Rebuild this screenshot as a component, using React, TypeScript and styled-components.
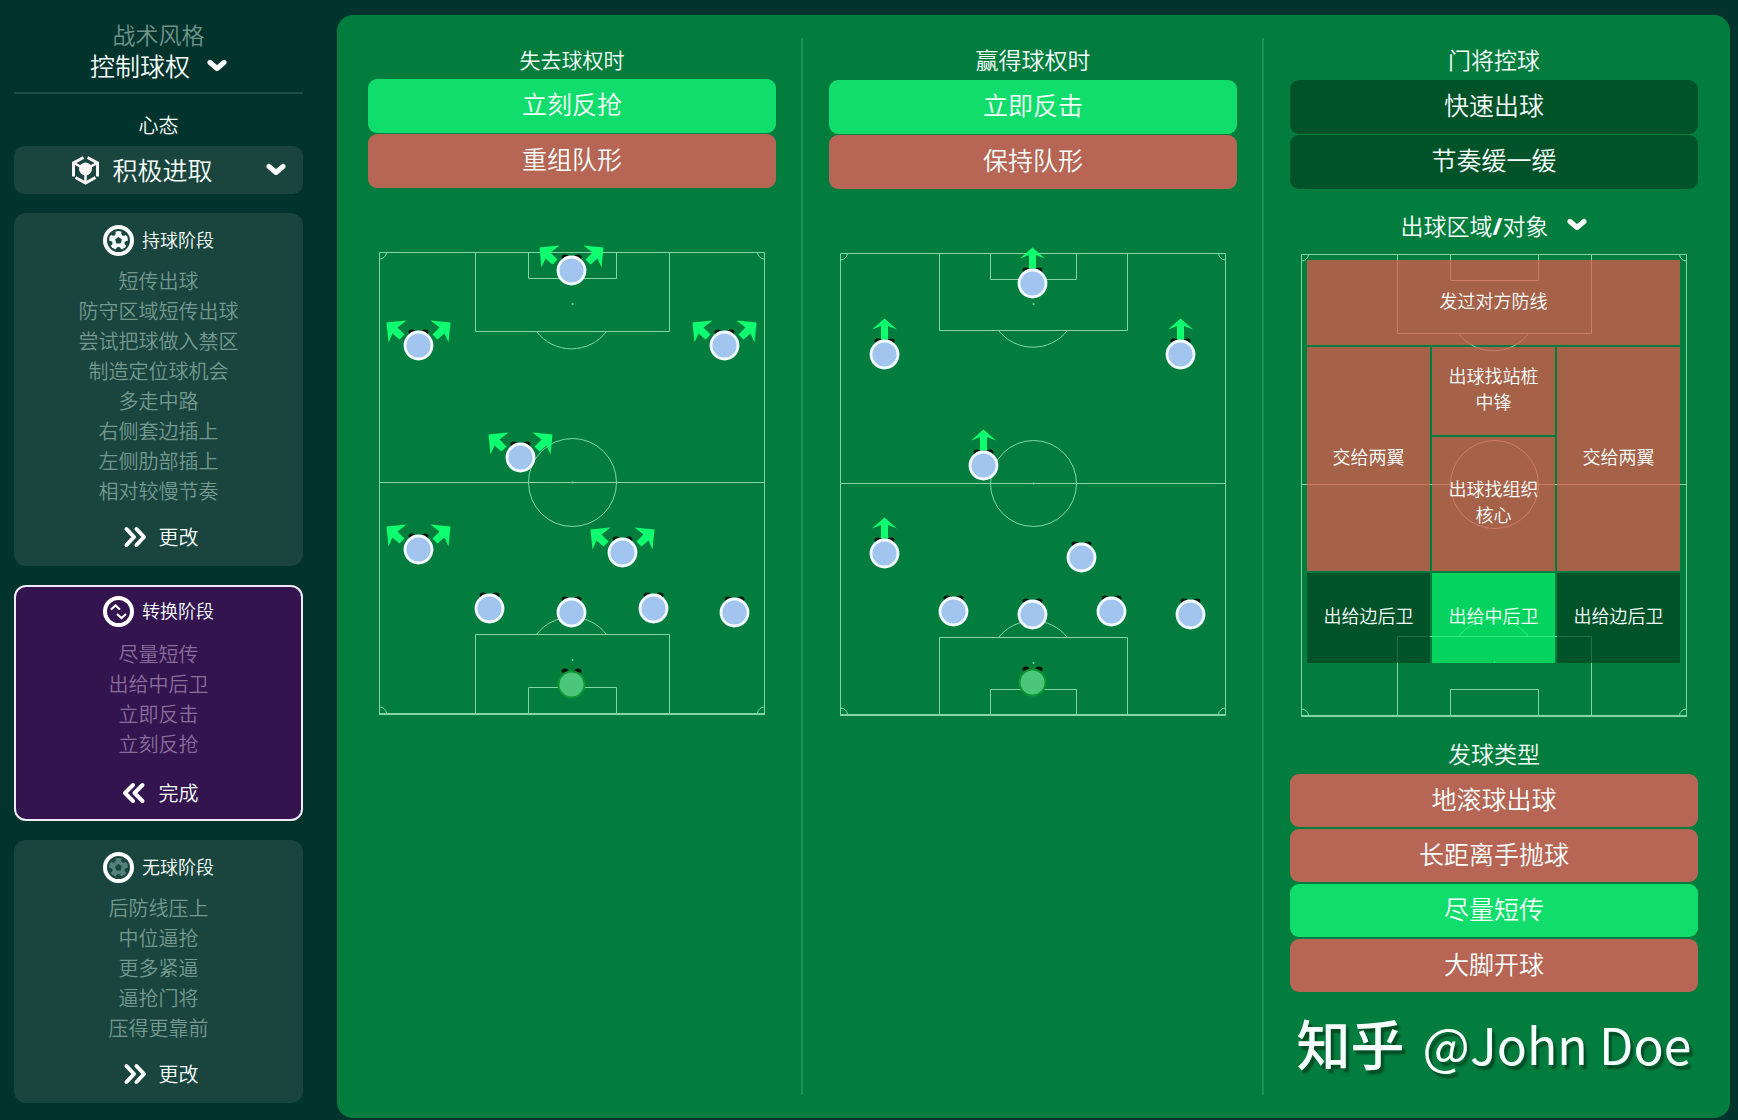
import React, { useState } from "react";
import styled, { createGlobalStyle, css } from "styled-components";

const GlobalStyle = createGlobalStyle`
  * { box-sizing: border-box; }
  body {
    margin: 0;
    background: #02332c;
    color: #f6fffc;
    font-family: "Noto Sans CJK SC", "Noto Sans", sans-serif;
    font-weight: 350;
  }
  button, select { font: inherit; color: inherit; cursor: pointer; }
  h2, h3, ul, p { margin: 0; padding: 0; font-weight: inherit; }
`;

/* ---------- shell ---------- */

const Page = styled.div`
  display: grid;
  grid-template-columns: 289px minmax(0, 1fr);
  gap: 34px;
  min-height: 100vh;
  padding: 15px 8px 2px 14px;
`;

const Sidebar = styled.aside`
  display: flex;
  flex-direction: column;
  gap: 19px;
`;

const Board = styled.main`
  display: grid;
  grid-template-columns: repeat(3, minmax(0, 1fr));
  padding: 23px 5px;
  border-radius: 16px;
  background: #027d3e;
`;

/* ---------- sidebar ---------- */

const StyleBlock = styled.div`
  display: flex;
  flex-direction: column;
  align-items: center;
  padding: 3px 0 10px;
  border-bottom: 2px solid #1b4f46;
`;

const StyleLabel = styled.label`
  font-size: 23px;
  line-height: 32px;
  color: #6f948a;
`;

const StylePicker = styled.div`
  display: flex;
  align-items: center;
  gap: 17px;
`;

const PlainSelect = styled.select`
  appearance: none;
  field-sizing: content;
  padding: 0 0 2px;
  border: 0;
  background: transparent;
  font-size: 25px;
  line-height: 30px;
`;

const MentalityBlock = styled.div`
  display: flex;
  flex-direction: column;
  gap: 6px;
  margin-top: -3px;
  text-align: center;
`;

const MentalityLabel = styled.label`
  font-size: 20px;
  line-height: 30px;
`;

const MentalityField = styled.div`
  display: flex;
  align-items: center;
  height: 48px;
  padding: 0 17px 0 4px;
  border-radius: 10px;
  background: #1a453e;
`;

const MentalityValue = styled.div`
  display: flex;
  flex: 1;
  align-items: center;
  justify-content: center;
  gap: 12px;
`;

const PhaseCard = styled.section<{ $active?: boolean }>`
  display: flex;
  flex-direction: column;
  align-items: center;
  gap: ${(p) => (p.$active ? "12px" : "10px")};
  padding: 12px 0 14px;
  border-radius: 12px;
  background: #1a453e;
  ${(p) =>
    p.$active &&
    css`
      padding: 9px 0 11px;
      border: 2px solid #eeeaf8;
      background: #33144f;
    `}
`;

const PhaseHeader = styled.h2`
  display: flex;
  align-items: center;
  gap: 8px;
  height: 31px;
  font-size: 18px;
  line-height: 28px;
`;

const PhaseTitle = styled.span`
  padding-bottom: 3px;
`;

const PhaseList = styled.ul<{ $active?: boolean }>`
  list-style: none;
  text-align: center;
  font-size: 20px;
  line-height: 30px;
  color: ${(p) => (p.$active ? "#896d9b" : "#739990")};
`;

const PhaseAction = styled.button<{ $active?: boolean }>`
  display: flex;
  align-items: center;
  gap: 12px;
  margin-top: ${(p) => (p.$active ? "7px" : "6px")};
  padding: 0;
  border: 0;
  background: transparent;
  font-size: 20px;
  line-height: 30px;
`;

/* ---------- board columns ---------- */

const Column = styled.section`
  display: flex;
  flex-direction: column;
  padding: 0 25px 0 26px;
  border-right: 2px solid #1d9155;
  &:last-child { border-color: transparent; }
`;

const ColumnTitle = styled.h3<{ $compact?: boolean }>`
  padding-top: 1px;
  text-align: center;
  font-size: ${(p) => (p.$compact ? "21px" : "23px")};
  line-height: ${(p) => (p.$compact ? "40px" : "41px")};
`;

const Choices = styled.div<{ $spaced?: boolean }>`
  display: grid;
  gap: ${(p) => (p.$spaced ? "2px" : "1px")};
  grid-auto-rows: ${(p) => (p.$spaced ? "53px" : "54px")};
`;

type Tone = "on" | "off" | "idle";
const toneFill: Record<Tone, string> = { on: "#10dd6b", off: "#b76656", idle: "#005228" };

const Choice = styled.button<{ $tone: Tone }>`
  padding: 0 0 6px;
  border: 0;
  border-radius: 9px;
  background: ${(p) => toneFill[p.$tone]};
  font-size: 25px;
  line-height: 32px;
`;

const PitchArea = styled.div<{ $below?: boolean }>`
  position: relative;
  margin: ${(p) => (p.$below ? "0 11px 14px" : "64px 11px 0")};
`;

const PitchSvg = styled.svg`
  display: block;
  width: 100%;
  height: auto;
  overflow: visible;
`;

const TargetButton = styled.button`
  display: flex;
  align-items: center;
  justify-content: center;
  gap: 19px;
  height: 56px;
  margin-top: 9px;
  padding: 0 0 2px;
  border: 0;
  background: transparent;
  font-size: 23px;
  line-height: 32px;
`;

const Slash = styled.b`
  font-family: "Noto Sans", sans-serif;
  font-weight: 800;
`;

const ZoneGrid = styled.div`
  position: absolute;
  inset: 6px 7px 55px 6px;
  display: grid;
  gap: 2px;
  grid-template-columns: repeat(3, minmax(0, 1fr));
  grid-template-rows: 85fr 88fr 134fr 90fr;
  grid-template-areas:
    "long long long"
    "wingL target wingR"
    "wingL maker wingR"
    "backL centre backR";
`;

const zoneFill: Record<Tone, string> = {
  on: "rgba(6, 248, 109, 0.7)",
  off: "rgba(236, 85, 79, 0.7)",
  idle: "rgba(0, 64, 31, 0.7)",
};

const Zone = styled.button<{ $area: string; $tone: Tone }>`
  grid-area: ${(p) => p.$area};
  padding: 0 16px 6px;
  border: 0;
  background: ${(p) => zoneFill[p.$tone]};
  font-size: 18px;
  line-height: 26px;
`;

const Credit = styled.p`
  display: flex;
  align-items: center;
  justify-content: center;
  gap: 18px;
  margin-top: 18px;
  font-size: 50px;
  line-height: 66px;
  font-weight: 400;
  white-space: nowrap;
  text-shadow: 3px 4px 2px rgba(0, 50, 25, 0.65);
`;

const CreditBrand = styled.strong`
  font-size: 54px;
  font-weight: 500;
`;

/* ---------- icons ---------- */

const ChevronDown = () => (
  <svg width="20" height="14" viewBox="0 0 20 14" fill="none" aria-hidden="true">
    <path d="M3 3.500 L10 9.500 L17 3.500" stroke="#fff" strokeWidth="5" strokeLinecap="round" strokeLinejoin="round" />
  </svg>
);

const DoubleChevron = ({ back }: { back?: boolean }) => (
  <svg width="28" height="22" viewBox="0 0 28 22" fill="none" stroke="#fff" strokeWidth="4" strokeLinecap="round" strokeLinejoin="round" aria-hidden="true">
    {back ? <path d="M14 3 L6 11 L14 19 M23.500 3 L15.500 11 L23.500 19" /> : <path d="M7.500 3 L15 11 L7.500 19 M17.500 3 L25 11 L17.500 19" />}
  </svg>
);

const MentalityIcon = () => (
  <svg width="29" height="30" viewBox="0 0 29 30" fill="none" stroke="#fbf6f5" strokeWidth="3" aria-hidden="true">
    <path d="M12.500 2.500 L2.500 8 L2.500 21.500 M16.500 2.500 L26.500 8 L26.500 21.500" />
    <path d="M4.500 22.500 L14.500 28 L24.500 22.500" />
    <path d="M3 8 L14.500 14.500 L26 8 M14.500 14.500 V27" strokeWidth="2.500" />
    <circle cx="14.500" cy="14" r="6.500" fill="#fbf6f5" stroke="none" />
  </svg>
);

const BallIcon = ({ dim }: { dim?: boolean }) => {
  const fill = dim ? "#54827a" : "#f6fffc";
  const dark = "#1a453e";
  return (
    <svg width="31" height="31" viewBox="-15.5 -15.5 31 31" aria-hidden="true">
      <circle r="13.500" fill={dark} stroke="#fff" strokeWidth="4" />
      <circle r="9.500" fill={fill} />
      <path d="M0 -3.600 L3.400 -1.100 L2.100 2.900 L-2.100 2.900 L-3.400 -1.100 Z" fill={dark} />
      {[36, 108, 180, 252, 324].map((a) => (
        <path key={a} d="M-3.200 -9.800 L3.200 -9.800 L1.900 -7.300 L0 -6.200 L-1.900 -7.300 Z" fill={dark} transform={`rotate(${a})`} />
      ))}
    </svg>
  );
};

const TransitionIcon = () => (
  <svg width="31" height="31" viewBox="0 0 31 31" fill="none" stroke="#fff" aria-hidden="true">
    <circle cx="15.500" cy="15.500" r="13.500" strokeWidth="4" />
    <path d="M8 13.500 L12.500 9.500 L17 13.500 M14 18 L18.500 22 L23 18" strokeWidth="2.200" />
  </svg>
);

/* ---------- pitch drawing ---------- */

type Geometry = {
  boxL: number; boxR: number; boxT: number; boxB: number;
  goalL: number; goalR: number; goalT: number; goalB: number;
  arcL: number; arcR: number; ring: number; spotT: number; spotB: number;
};

const standard: Geometry = {
  boxL: 96.5, boxR: 290.5, boxT: 79.5, boxB: 382.5,
  goalL: 149.5, goalR: 237.5, goalT: 26.5, goalB: 435.5,
  arcL: 157.5, arcR: 227.5, ring: 44, spotT: 52, spotB: 408,
};

const narrow: Geometry = {
  boxL: 99.5, boxR: 287.5, boxT: 77.5, boxB: 384.5,
  goalL: 150.5, goalR: 236.5, goalT: 26.5, goalB: 436.5,
  arcL: 158.5, arcR: 227.5, ring: 43, spotT: 51, spotB: 410,
};

type Move = "press" | "forward" | "keeper" | undefined;
type Player = [number, number, Move?];

const pressing: Player[] = [
  [192, 18, "press"], [39, 93, "press"], [345, 93, "press"], [141, 205, "press"],
  [39, 297, "press"], [243, 300, "press"],
  [110, 356], [192, 360], [274, 356], [355, 360], [192, 432, "keeper"],
];

const countering: Player[] = [
  [192, 30, "forward"], [44, 101, "forward"], [340, 101, "forward"], [143, 212, "forward"],
  [44, 300, "forward"], [241, 304],
  [113, 358], [192, 361], [271, 358], [350, 361], [192, 429, "keeper"],
];

const wing = "-32,-23 -12,-25 -21,-18 -14,-11 -19,-6 -26,-12 -30,-3";

const Marker = ({ at: [x, y, move] }: { at: Player }) => (
  <g transform={`translate(${x + 0.5} ${y + 0.5})`}>
    <ellipse cx="-6.500" cy="-13.500" rx="3.500" ry="2.500" fill="#04140b" />
    <ellipse cx="6.500" cy="-13.500" rx="3.500" ry="2.500" fill="#04140b" />
    {move === "press" && (
      <g fill="#10ff70">
        <polygon points={wing} />
        <polygon points={wing} transform="scale(-1 1)" />
      </g>
    )}
    {move === "forward" && <polygon points="0,-36 12.500,-25 3.500,-28.500 3.500,-15 -3.500,-15 -3.500,-28.500 -12.500,-25" fill="#10ff70" />}
    {move === "keeper" ? (
      <circle r="13" fill="#4cc67a" stroke="#0b9632" strokeWidth="2" />
    ) : (
      <circle r="13.500" fill="#a1c5ef" stroke="#f3fbff" strokeWidth="2.800" />
    )}
  </g>
);

const Pitch = ({ g, players = [] }: { g: Geometry; players?: Player[] }) => (
  <PitchSvg viewBox="0 0 386 464" role="img" aria-label="球场">
    <g fill="none" stroke="#82d6a6">
      <path d="M0.500 462 V0.500 H385.500 V462 M0 230.500 H386" />
      <path d="M0 462 H386" strokeWidth="2" />
      <path d={`M${g.boxL} 0 V${g.boxT} H${g.boxR} V0 M${g.boxL} 462 V${g.boxB} H${g.boxR} V462`} />
      <path d={`M${g.goalL} 0 V${g.goalT} H${g.goalR} V0 M${g.goalL} 462 V${g.goalB} H${g.goalR} V462`} />
      <path d={`M${g.arcL} ${g.boxT} A44 44 0 0 0 ${g.arcR} ${g.boxT} M${g.arcL} ${g.boxB} A44 44 0 0 1 ${g.arcR} ${g.boxB}`} />
      <circle cx="193.500" cy="230.500" r={g.ring} />
      <path d="M7.500 0.500 A7 7 0 0 1 0.500 7 M378.500 0.500 A7 7 0 0 0 385.500 7 M7.500 461 A7 7 0 0 0 0.500 455 M378.500 461 A7 7 0 0 1 385.500 455" />
    </g>
    <g fill="#82d6a6">
      <circle cx="193.500" cy={g.spotT} r="1" />
      <circle cx="193.500" cy="230.500" r="1" />
      <circle cx="193.500" cy={g.spotB} r="1" />
    </g>
    {players.map((p) => (
      <Marker key={`${p[0]}-${p[1]}`} at={p} />
    ))}
  </PitchSvg>
);

/* ---------- data ---------- */

const zones: { area: string; tone: Tone; text: string }[] = [
  { area: "long", tone: "off", text: "发过对方防线" },
  { area: "wingL", tone: "off", text: "交给两翼" },
  { area: "target", tone: "off", text: "出球找站桩中锋" },
  { area: "wingR", tone: "off", text: "交给两翼" },
  { area: "maker", tone: "off", text: "出球找组织核心" },
  { area: "backL", tone: "idle", text: "出给边后卫" },
  { area: "centre", tone: "on", text: "出给中后卫" },
  { area: "backR", tone: "idle", text: "出给边后卫" },
];

const phases = [
  {
    title: "持球阶段",
    icon: <BallIcon />,
    items: ["短传出球", "防守区域短传出球", "尝试把球做入禁区", "制造定位球机会", "多走中路", "右侧套边插上", "左侧肋部插上", "相对较慢节奏"],
  },
  { title: "转换阶段", icon: <TransitionIcon />, active: true, items: ["尽量短传", "出给中后卫", "立即反击", "立刻反抢"] },
  { title: "无球阶段", icon: <BallIcon dim />, items: ["后防线压上", "中位逼抢", "更多紧逼", "逼抢门将", "压得更靠前"] },
];

const ChoiceGroup = ({ options, initial, rest = "off", spaced }: { options: string[]; initial?: string; rest?: Tone; spaced?: boolean }) => {
  const [picked, setPicked] = useState(initial);
  return (
    <Choices $spaced={spaced}>
      {options.map((o) => (
        <Choice key={o} type="button" aria-pressed={o === picked} $tone={o === picked ? "on" : rest} onClick={() => setPicked(o)}>
          {o}
        </Choice>
      ))}
    </Choices>
  );
};

export default function App() {
  return (
    <>
      <GlobalStyle />
      <Page>
        <Sidebar>
          <StyleBlock>
            <StyleLabel htmlFor="tactic-style">战术风格</StyleLabel>
            <StylePicker>
              <PlainSelect id="tactic-style">
                <option>控制球权</option>
              </PlainSelect>
              <ChevronDown />
            </StylePicker>
          </StyleBlock>
          <MentalityBlock>
            <MentalityLabel htmlFor="mentality">心态</MentalityLabel>
            <MentalityField>
              <MentalityValue>
                <MentalityIcon />
                <PlainSelect id="mentality">
                  <option>积极进取</option>
                </PlainSelect>
              </MentalityValue>
              <ChevronDown />
            </MentalityField>
          </MentalityBlock>
          {phases.map((p) => (
            <PhaseCard key={p.title} $active={p.active}>
              <PhaseHeader>
                {p.icon}
                <PhaseTitle>{p.title}</PhaseTitle>
              </PhaseHeader>
              <PhaseList $active={p.active}>
                {p.items.map((i) => (
                  <li key={i}>{i}</li>
                ))}
              </PhaseList>
              <PhaseAction type="button" $active={p.active}>
                <DoubleChevron back={p.active} />
                {p.active ? "完成" : "更改"}
              </PhaseAction>
            </PhaseCard>
          ))}
        </Sidebar>
        <Board>
          <Column>
            <ColumnTitle $compact>失去球权时</ColumnTitle>
            <ChoiceGroup options={["立刻反抢", "重组队形"]} initial="立刻反抢" />
            <PitchArea>
              <Pitch g={standard} players={pressing} />
            </PitchArea>
          </Column>
          <Column>
            <ColumnTitle>赢得球权时</ColumnTitle>
            <ChoiceGroup options={["立即反击", "保持队形"]} initial="立即反击" />
            <PitchArea>
              <Pitch g={narrow} players={countering} />
            </PitchArea>
          </Column>
          <Column>
            <ColumnTitle>门将控球</ColumnTitle>
            <ChoiceGroup options={["快速出球", "节奏缓一缓"]} rest="idle" />
            <TargetButton type="button" aria-haspopup="listbox">
              <span>
                出球区域<Slash>/</Slash>对象
              </span>
              <ChevronDown />
            </TargetButton>
            <PitchArea $below>
              <Pitch g={standard} />
              <ZoneGrid>
                {zones.map((z) => (
                  <Zone key={z.area} type="button" $area={z.area} $tone={z.tone} aria-pressed={z.tone === "on"}>
                    {z.text}
                  </Zone>
                ))}
              </ZoneGrid>
            </PitchArea>
            <ColumnTitle>发球类型</ColumnTitle>
            <ChoiceGroup options={["地滚球出球", "长距离手抛球", "尽量短传", "大脚开球"]} initial="尽量短传" spaced />
            <Credit>
              <CreditBrand>知乎</CreditBrand>
              <span>@John Doe</span>
            </Credit>
          </Column>
        </Board>
      </Page>
    </>
  );
}
